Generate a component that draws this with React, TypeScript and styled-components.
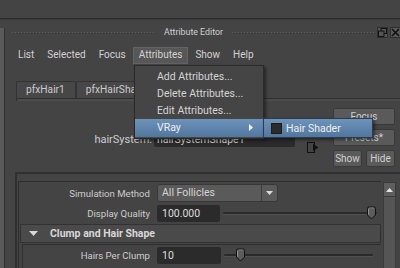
import styled, { createGlobalStyle } from "styled-components";

const GlobalStyle = createGlobalStyle`
  html, body {
    margin: 0;
    padding: 0;
    background: #444444;
  }
`;

const menuItems = ["List", "Selected", "Focus", "Attributes", "Show", "Help"];
const attrItems = ["Add Attributes...", "Delete Attributes...", "Edit Attributes..."];

const Slider = ({ width, thumb }: { width: number; thumb: number }) => (
  <SliderBox style={{ width }}>
    <Groove />
    <Thumb style={{ left: thumb }} viewBox="0 0 11 14" width={11} height={14}>
      <path d="M1.5 2.5 Q1.5 1 3 1 H8 Q9.5 1 9.5 2.5 V9 L5.5 13 L1.5 9 Z" fill="#5c5c5c" stroke="#101010" />
      <path d="M2.6 2.8 V8.6" stroke="#9a9a9a" />
      <path d="M3.5 2 H8" stroke="#7a7a7a" />
    </Thumb>
  </SliderBox>
);

const App = () => {
  return (
    <Screen>
      <GlobalStyle />
      <TopBand />
      <Body>
        <LeftStrip />
        <Window>
          <TitleBar>
            <Grip />
            <Title>Attribute Editor</Title>
            <Grip />
            <TitleButtons>
              <TitleButton>
                <svg width="9" height="9" viewBox="0 0 9 9">
                  <rect x="3" y="0.5" width="5.5" height="5" fill="none" stroke="#111" />
                  <rect x="0.5" y="3" width="5.5" height="5.5" fill="#555" stroke="#111" />
                </svg>
              </TitleButton>
              <TitleButton>
                <svg width="9" height="9" viewBox="0 0 9 9">
                  <path d="M1 1 L8 8 M8 1 L1 8" stroke="#111" strokeWidth="1.6" />
                </svg>
              </TitleButton>
            </TitleButtons>
          </TitleBar>

          <MenuBar>
            {menuItems.map((m) => (
              <MenuItem key={m} $active={m === "Attributes"}>
                {m}
              </MenuItem>
            ))}
          </MenuBar>

          <TabRow>
            <Tab>pfxHair1</Tab>
            <Tab>pfxHairShape1</Tab>
          </TabRow>
          <TabPaneEdge />

          <UpperContent>
            <NodeArea>
              <NodeLabel>hairSystem:</NodeLabel>
              <NodeField>hairSystemShape1</NodeField>
              <ConnIcon width="12" height="11" viewBox="0 0 12 11">
                <rect x="0.5" y="0.5" width="7" height="10" fill="none" stroke="#111" />
                <path d="M6 2 L11.5 5.5 L6 9 Z" fill="#111" />
              </ConnIcon>
            </NodeArea>
            <ButtonColumn>
              <SmallButton>Focus</SmallButton>
              <SmallButton>Presets*</SmallButton>
              <ButtonPair>
                <SmallButton>Show</SmallButton>
                <SmallButton>Hide</SmallButton>
              </ButtonPair>
            </ButtonColumn>
          </UpperContent>

          <LowerFrame>
            <InnerFrame>
              <AttrRow>
                <Label $width={131}>Simulation Method</Label>
                <Dropdown>
                  <DropText>All Follicles</DropText>
                  <DropArrow>
                    <svg width="7" height="4" viewBox="0 0 7 4">
                      <path d="M0 0 H7 L3.5 4 Z" fill="#dcdcdc" />
                    </svg>
                  </DropArrow>
                </Dropdown>
              </AttrRow>
              <AttrRow>
                <Label $width={131}>Display Quality</Label>
                <Field $width={63}>100.000</Field>
                <Slider width={154} thumb={143} />
              </AttrRow>
              <SectionHeader>
                <svg width="9" height="5" viewBox="0 0 9 5">
                  <path d="M0 0 H9 L4.5 5 Z" fill="#d8d8d8" />
                </svg>
                <SectionTitle>Clump and Hair Shape</SectionTitle>
              </SectionHeader>
              <SubFrame>
                <AttrRow>
                  <Label $width={127}>Hairs Per Clump</Label>
                  <Field $width={64}>10</Field>
                  <Slider width={149} thumb={11} />
                </AttrRow>
              </SubFrame>
            </InnerFrame>
            <Scrollbar>
              <ScrollUp>
                <svg width="7" height="4" viewBox="0 0 7 4">
                  <path d="M0 4 H7 L3.5 0 Z" fill="#e4e4e4" />
                </svg>
              </ScrollUp>
            </Scrollbar>
          </LowerFrame>
        </Window>
      </Body>

      <DropMenu>
        {attrItems.map((a) => (
          <DropEntry key={a}>{a}</DropEntry>
        ))}
        <DropEntry $hot>
          VRay
          <SubArrow>
            <svg width="4" height="7" viewBox="0 0 4 7">
              <path d="M0 0 L4 3.5 L0 7 Z" fill="#f0f0f0" />
            </svg>
          </SubArrow>
        </DropEntry>
      </DropMenu>
      <SubMenu>
        <CheckBox />
        Hair Shader
      </SubMenu>
    </Screen>
  );
};

const Screen = styled.div`
  position: relative;
  width: 400px;
  height: 268px;
  overflow: hidden;
  display: flex;
  flex-direction: column;
  background: #444444;
  color: #c8c8c8;
  font-family: Roboto, "Liberation Sans", sans-serif;
  font-size: 10px;
`;

const TopBand = styled.div`
  flex: none;
  height: 18px;
  border-bottom: 1px solid #2c2c2c;
  box-shadow: 0 1px 0 #3a3a3a;
`;

const Body = styled.div`
  flex: 1;
  display: flex;
  min-height: 0;
`;

const LeftStrip = styled.div`
  flex: none;
  width: 4px;
  margin-top: 9px;
  background: #5a5a5a;
  border-right: 1px solid #323232;
`;

const Window = styled.div`
  flex: 1;
  min-width: 0;
  display: flex;
  flex-direction: column;
`;

const TitleBar = styled.div`
  flex: none;
  height: 26px;
  display: flex;
  align-items: center;
  padding-left: 7px;
`;

const Grip = styled.div`
  flex: 1;
  height: 2px;
  margin-top: 1px;
  background-image: repeating-linear-gradient(90deg, #606060 0 1px, transparent 1px 3px),
    repeating-linear-gradient(90deg, transparent 0 1px, #363636 1px 2px, transparent 2px 3px);
  background-size: 100% 1px, 100% 1px;
  background-position: 0 0, 0 1px;
  background-repeat: no-repeat;
`;

const Title = styled.span`
  margin: 0 9px;
  font-size: 8.8px;
  color: #d0d0d0;
`;

const TitleButtons = styled.div`
  flex: none;
  width: 23px;
  margin-left: 2px;
  display: flex;
  gap: 2px;
  overflow: hidden;
`;

const TitleButton = styled.div`
  flex: none;
  width: 11px;
  height: 11px;
  display: flex;
  align-items: center;
  justify-content: center;
  background: #585858;
  border: 1px solid #2e2e2e;
  box-sizing: border-box;
`;

const MenuBar = styled.div`
  flex: none;
  height: 21px;
  display: flex;
  align-items: center;
  gap: 1px;
  padding-left: 7px;
`;

const MenuItem = styled.div<{ $active?: boolean }>`
  padding: 1px 5px 2px;
  line-height: 12px;
  font-size: 10px;
  color: #d2d2d2;
  border: 1px solid ${(p) => (p.$active ? "#636363" : "transparent")};
  background: ${(p) => (p.$active ? "#575757" : "transparent")};
`;

const TabRow = styled.div`
  flex: none;
  display: flex;
  margin-top: 15px;
  padding-left: 11px;
  height: 17px;
`;

const Tab = styled.div`
  padding: 0 10px 0 9px;
  line-height: 16px;
  font-size: 10.2px;
  color: #cccccc;
  border: 1px solid #333333;
  border-bottom: none;
  border-radius: 2px 2px 0 0;
  background: #474747;
`;

const TabPaneEdge = styled.div`
  flex: none;
  height: 2px;
  margin-left: 11px;
  border-top: 1px solid #2f2f2f;
  border-left: 1px solid #2f2f2f;
  border-radius: 2px 0 0 0;
  background: #4c4c4c;
`;

const UpperContent = styled.div`
  flex: none;
  height: 71px;
  display: flex;
  align-items: flex-start;
`;

const NodeArea = styled.div`
  flex: 1;
  display: flex;
  align-items: flex-start;
  padding-top: 31px;
`;

const NodeLabel = styled.span`
  width: 147px;
  line-height: 15px;
  text-align: right;
  font-size: 11px;
  color: #cccccc;
`;

const NodeField = styled.div`
  width: 138px;
  height: 15px;
  margin-left: 2px;
  padding-left: 3px;
  line-height: 15px;
  font-size: 10.5px;
  color: #d8d8d8;
  background: #2b2b2b;
  border-radius: 2px;
`;

const ConnIcon = styled.svg`
  margin: 10px 0 0 12px;
  flex: none;
`;

const ButtonColumn = styled.div`
  flex: none;
  width: 62px;
  margin: 7px 5px 0 0;
  display: flex;
  flex-direction: column;
  gap: 4px;
`;

const ButtonPair = styled.div`
  display: flex;
  gap: 4px;
`;

const SmallButton = styled.div`
  flex: 1;
  height: 17px;
  line-height: 15px;
  text-align: center;
  font-size: 10px;
  color: #cfcfcf;
  background: #5a5a5a;
  border: 1px solid #393939;
  border-radius: 2px;
  box-sizing: border-box;
`;

const LowerFrame = styled.div`
  flex: 1;
  display: flex;
  margin-left: 10px;
  padding: 7px 0 0 1px;
  border-top: 2px solid #303030;
  border-left: 2px solid #303030;
  min-height: 0;
`;

const InnerFrame = styled.div`
  flex: 1;
  display: flex;
  flex-direction: column;
  padding-top: 2px;
  border-top: 1px solid #2e2e2e;
  border-left: 1px solid #2e2e2e;
`;

const AttrRow = styled.div`
  height: 18px;
  margin-bottom: 2px;
  display: flex;
  align-items: center;
`;

const Label = styled.span<{ $width: number }>`
  flex: none;
  width: ${(p) => p.$width}px;
  margin-right: 7px;
  text-align: right;
  font-size: 9.6px;
  color: #cccccc;
`;

const Dropdown = styled.div`
  width: 121px;
  height: 18px;
  display: flex;
  box-sizing: border-box;
  background: #5a5a5a;
  border: 1px solid #383838;
  border-radius: 3px;
`;

const DropText = styled.span`
  flex: 1;
  padding-left: 4px;
  line-height: 16px;
  font-size: 10.5px;
  color: #d4d4d4;
`;

const DropArrow = styled.div`
  width: 15px;
  display: flex;
  align-items: center;
  justify-content: center;
  border-left: 1px solid #3c3c3c;
`;

const Field = styled.div<{ $width: number }>`
  flex: none;
  width: ${(p) => p.$width}px;
  height: 17px;
  padding-left: 5px;
  box-sizing: border-box;
  line-height: 17px;
  font-size: 10.5px;
  color: #dedede;
  background: #2b2b2b;
  border-radius: 2px;
`;

const SliderBox = styled.div`
  position: relative;
  height: 18px;
  margin-left: 3px;
  display: flex;
  align-items: center;
`;

const Groove = styled.div`
  flex: 1;
  height: 2px;
  border-radius: 2px;
  background: #2a2a2a;
  box-shadow: 0 1px 0 #505050;
`;

const Thumb = styled.svg`
  position: absolute;
  top: 2px;
`;

const SectionHeader = styled.div`
  height: 19px;
  margin: 0 0 1px 1px;
  padding-left: 8px;
  display: flex;
  align-items: center;
  box-sizing: border-box;
  background: #4a4a4a;
  border: 1px solid #323232;
`;

const SectionTitle = styled.span`
  margin-left: 12px;
  font-size: 10.5px;
  font-weight: bold;
  color: #d8d8d8;
`;

const SubFrame = styled.div`
  flex: 1;
  margin-left: 3px;
  padding-top: 1px;
  border-top: 1px solid #2e2e2e;
  border-left: 1px solid #2e2e2e;
`;

const Scrollbar = styled.div`
  flex: none;
  width: 13px;
  margin: 1px 4px 0 2px;
  background: #555555;
  border: 1px solid #3a3a3a;
  border-bottom: none;
  box-sizing: border-box;
`;

const ScrollUp = styled.div`
  height: 13px;
  display: flex;
  align-items: center;
  justify-content: center;
  background: #5e5e5e;
  border-bottom: 1px solid #3a3a3a;
`;

const DropMenu = styled.div`
  position: absolute;
  left: 134px;
  top: 65px;
  width: 130px;
  padding: 2px 0 1px;
  box-sizing: border-box;
  background: #454545;
  border: 1px solid #2a2a2a;
  box-shadow: 2px 2px 3px rgba(0, 0, 0, 0.45);
`;

const DropEntry = styled.div<{ $hot?: boolean }>`
  position: relative;
  height: ${(p) => (p.$hot ? 18 : 17)}px;
  line-height: ${(p) => (p.$hot ? 18 : 17)}px;
  padding-left: 22px;
  font-size: 10.5px;
  color: ${(p) => (p.$hot ? "#eeeeee" : "#d4d4d4")};
  background: ${(p) => (p.$hot ? "linear-gradient(#6e93ba, #52779f)" : "transparent")};
`;

const SubArrow = styled.span`
  position: absolute;
  right: 10px;
  top: 5px;
  display: flex;
`;

const SubMenu = styled.div`
  position: absolute;
  left: 263px;
  top: 118px;
  width: 110px;
  height: 20px;
  padding-left: 7px;
  display: flex;
  align-items: center;
  gap: 4px;
  box-sizing: border-box;
  font-size: 10.5px;
  color: #eeeeee;
  background: linear-gradient(#6e93ba, #52779f);
  border: 1px solid #2c3c4e;
  box-shadow: 2px 2px 3px rgba(0, 0, 0, 0.45);
`;

const CheckBox = styled.div`
  width: 11px;
  height: 11px;
  box-sizing: border-box;
  background: #2b2b2b;
  border: 1px solid #1c1c1c;
`;

export default App;
